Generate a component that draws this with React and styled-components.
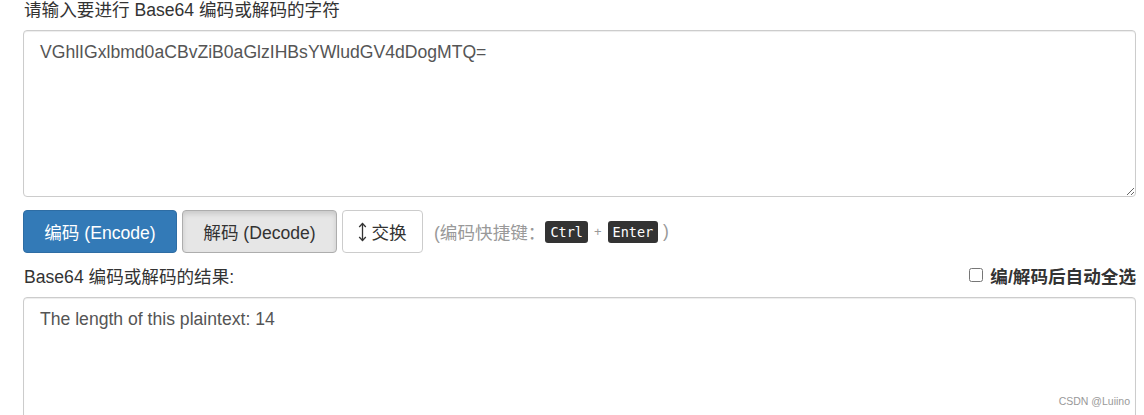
import React, { useState } from 'react';
import styled, { createGlobalStyle } from 'styled-components';

const GlobalStyle = createGlobalStyle`
  html, body {
    margin: 0;
    padding: 0;
    background: #fff;
  }
  body {
    font-family: "Liberation Sans", "Noto Sans CJK SC", sans-serif;
    font-size: 17.6px;
    color: #333;
    overflow: hidden;
  }
`;

const Page = styled.div`
  position: relative;
  width: 1113px;
  height: 415px;
  padding-left: 23px;
  overflow: hidden;
`;

const Label = styled.div`
  height: 20px;
  line-height: 20px;
  padding-left: 1px;
  margin-bottom: 10px;
`;

const TextArea = styled.textarea`
  display: block;
  box-sizing: border-box;
  width: 100%;
  height: ${(p) => p.$height}px;
  padding: 9px 16px;
  border: 1px solid #ccc;
  border-radius: 4px;
  box-shadow: inset 0 1px 1px rgba(0, 0, 0, 0.075);
  font-family: "Liberation Sans", "Noto Sans CJK SC", sans-serif;
  font-size: 17.6px;
  line-height: 24px;
  color: #555;
  resize: ${(p) => (p.$resize ? 'vertical' : 'none')};
  outline: none;
`;

const Toolbar = styled.div`
  display: flex;
  align-items: center;
  gap: 5px;
  margin-top: 13px;
  height: 43px;
`;

const variants = {
  primary: { bg: '#337ab7', border: '#2e6da4', color: '#fff', shadow: 'none' },
  active: { bg: '#e6e6e6', border: '#adadad', color: '#333', shadow: 'inset 0 3px 5px rgba(0,0,0,0.125)' },
  plain: { bg: '#fff', border: '#ccc', color: '#333', shadow: 'none' },
};

const Button = styled.button`
  box-sizing: border-box;
  height: 43px;
  width: ${(p) => p.$width}px;
  padding: 0;
  display: flex;
  align-items: center;
  justify-content: center;
  gap: 4px;
  border-radius: 4px;
  border: 1px solid ${(p) => variants[p.$variant].border};
  background: ${(p) => variants[p.$variant].bg};
  color: ${(p) => variants[p.$variant].color};
  box-shadow: ${(p) => variants[p.$variant].shadow};
  font-family: "Liberation Sans", "Noto Sans CJK SC", sans-serif;
  font-size: 17.6px;
  cursor: pointer;
`;

const Hint = styled.span`
  display: flex;
  align-items: center;
  margin-left: 6px;
  color: #999;
  white-space: nowrap;
`;

const Kbd = styled.kbd`
  display: inline-block;
  padding: 2px 5px;
  line-height: 18px;
  background: #333;
  color: #fff;
  border-radius: 3px;
  font-family: "DejaVu Sans Mono", "Liberation Mono", monospace;
  font-size: 13.5px;
`;

const Plus = styled.span`
  font-size: 13px;
  margin: 0 6px;
`;

const ResultHeader = styled.div`
  display: flex;
  align-items: center;
  justify-content: space-between;
  height: 24px;
  margin: 10px 0;
  padding-left: 1px;
`;

const CheckLabel = styled.label`
  display: flex;
  align-items: center;
  gap: 7px;
  font-weight: bold;
  cursor: pointer;
`;

const Check = styled.input`
  width: 14px;
  height: 14px;
  margin: 0;
`;

const Watermark = styled.div`
  position: absolute;
  right: 6px;
  bottom: 8px;
  font-size: 10.5px;
  color: #999;
`;

const SwapIcon = () => (
  <svg width="9" height="20" viewBox="0 0 9 20" fill="none" stroke="#333" strokeWidth="1.3">
    <path d="M4.5 1.5v17" />
    <path d="M1.2 5l3.3-3.5L7.8 5" />
    <path d="M1.2 15l3.3 3.5 3.3-3.5" />
  </svg>
);

export default function App() {
  const [input, setInput] = useState('VGhlIGxlbmd0aCBvZiB0aGlzIHBsYWludGV4dDogMTQ=');
  const [output, setOutput] = useState('The length of this plaintext: 14');

  return (
    <Page>
      <GlobalStyle />
      <Label>请输入要进行 Base64 编码或解码的字符</Label>
      <TextArea $height={167} $resize value={input} onChange={(e) => setInput(e.target.value)} />
      <Toolbar>
        <Button $variant="primary" $width={154}>编码 (Encode)</Button>
        <Button $variant="active" $width={155}>解码 (Decode)</Button>
        <Button $variant="plain" $width={81}>
          <SwapIcon />
          交换
        </Button>
        <Hint>
          (编码快捷键：<Kbd>Ctrl</Kbd>
          <Plus>+</Plus>
          <Kbd>Enter</Kbd>&nbsp;)
        </Hint>
      </Toolbar>
      <ResultHeader>
        <span>Base64 编码或解码的结果:</span>
        <CheckLabel>
          <Check type="checkbox" />
          编/解码后自动全选
        </CheckLabel>
      </ResultHeader>
      <TextArea $height={160} value={output} onChange={(e) => setOutput(e.target.value)} />
      <Watermark>CSDN @Luiino</Watermark>
    </Page>
  );
}
